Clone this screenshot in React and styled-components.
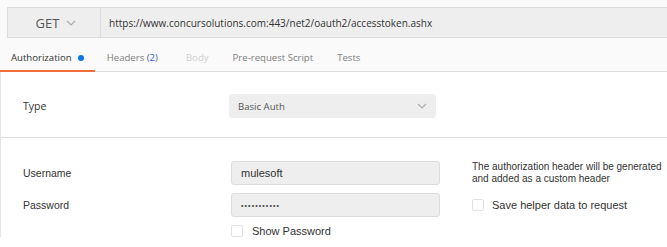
import React from "react";
import styled, { createGlobalStyle } from "styled-components";

const GlobalStyle = createGlobalStyle`
  html, body {
    margin: 0;
    background: #ffffff;
  }
  body {
    font-family: "Open Sans", "Liberation Sans", sans-serif;
    color: #333;
  }
`;

const Chevron = ({ size = 10, color = "#aaa" }) => (
  <svg width={size} height={size * 0.6} viewBox="0 0 10 6" fill="none">
    <path d="M1 1l4 4 4-4" stroke={color} strokeWidth="1.1" />
  </svg>
);

const Page = styled.div`
  width: 667px;
  height: 247px;
  overflow: hidden;
`;

const Header = styled.div`
  background: #fafafa;
  padding-top: 7px;
`;

const UrlBar = styled.div`
  display: flex;
  height: 31px;
  margin-left: 7px;
`;

const MethodSelect = styled.div`
  width: 93px;
  display: flex;
  align-items: center;
  justify-content: center;
  gap: 7px;
  background: #eeeeee;
  border: 1px solid #dcdcdc;
  border-right: none;
  box-sizing: border-box;
  font-size: 13px;
  color: #555;
  padding-left: 4px;
`;

const UrlInput = styled.div`
  flex: 1;
  display: flex;
  align-items: center;
  padding-left: 8px;
  background: #eeeeee;
  border: 1px solid #dcdcdc;
  border-right: none;
  font-size: 10px;
  color: #333;
`;

const Tabs = styled.div`
  display: flex;
  height: 34px;
  border-bottom: 1px solid #dddddd;
  box-sizing: border-box;
`;

const Tab = styled.div`
  display: flex;
  align-items: center;
  gap: 6px;
  padding: 7px ${(p) => p.$pad || 12}px 0;
  font-size: 9.6px;
  color: ${(p) => (p.$disabled ? "#cfcfcf" : p.$active ? "#333" : "#808080")};
  border-bottom: 2px solid ${(p) => (p.$active ? "#f26b3a" : "transparent")};
  margin-bottom: -1px;
  margin-right: ${(p) => p.$mr || 0}px;
`;

const Dot = styled.span`
  width: 6px;
  height: 6px;
  border-radius: 50%;
  background: #0b74e5;
`;

const Count = styled.span`
  color: #3d5bd9;
`;

const Body = styled.div`
  border-left: 1px solid #e4e4e4;
  background: #fff;
`;

const TypeRow = styled.div`
  display: grid;
  grid-template-columns: 206px 207px 1fr;
  padding: 3px 0 0 22px;
  height: 66px;
  align-items: center;
  border-bottom: 1px solid #dcdcdc;
  box-sizing: border-box;
`;

const Label = styled.div`
  font-family: ${(p) => (p.$helv ? '"Liberation Sans", Arial, sans-serif' : '"Open Sans", sans-serif')};
  font-size: 10.5px;
  color: #333;
  height: ${(p) => p.$h || "auto"};
  display: flex;
  align-items: center;
`;

const Select = styled.div`
  height: 24px;
  background: #eeeeee;
  border-radius: 3px;
  display: flex;
  align-items: center;
  justify-content: space-between;
  padding: 0 9px;
  font-size: 9.6px;
  color: #555;
`;

const Credentials = styled.div`
  display: grid;
  grid-template-columns: 208px 209px 1fr;
  padding: 23px 0 0 22px;
`;

const Column = styled.div`
  display: flex;
  flex-direction: column;
  gap: 8px;
`;

const Input = styled.div`
  height: 24px;
  box-sizing: border-box;
  background: #eeeeee;
  border: 1px solid #dcdcdc;
  border-radius: 3px;
  display: flex;
  align-items: center;
  padding-left: 9px;
  font-family: "Liberation Sans", Arial, sans-serif;
  font-size: 11px;
  color: #333;
`;

const Masked = styled.span`
  font-size: 7px;
  letter-spacing: 1.1px;
  color: #444;
`;

const CheckRow = styled.label`
  display: flex;
  align-items: center;
  gap: ${(p) => p.$gap || 9}px;
  font-family: "Liberation Sans", Arial, sans-serif;
  font-size: 11px;
  color: #333;
  margin-top: ${(p) => p.$mt || 0}px;
  white-space: nowrap;
`;

const Box = styled.span`
  width: 12px;
  height: 12px;
  box-sizing: border-box;
  border: 1px solid #e2e2e2;
  border-radius: 2px;
  background: #fff;
`;

const HelpCol = styled.div`
  padding-left: 32px;
`;

const HelpText = styled.p`
  margin: 0;
  font-family: "Liberation Sans", Arial, sans-serif;
  font-size: 10px;
  line-height: 12px;
  color: #333;
  white-space: nowrap;
`;

export default function App() {
  return (
    <Page>
      <GlobalStyle />
      <Header>
        <UrlBar>
          <MethodSelect>
            GET <Chevron />
          </MethodSelect>
          <UrlInput>https://www.concursolutions.com:443/net2/oauth2/accesstoken.ashx</UrlInput>
        </UrlBar>
        <Tabs>
          <Tab $active $pad={11}>
            Authorization <Dot />
          </Tab>
          <Tab $mr={4}>
            <span>
              Headers <Count>(2)</Count>
            </span>
          </Tab>
          <Tab $disabled>Body</Tab>
          <Tab>Pre-request Script</Tab>
          <Tab>Tests</Tab>
        </Tabs>
      </Header>
      <Body>
        <TypeRow>
          <Label>Type</Label>
          <Select>
            Basic Auth <Chevron />
          </Select>
        </TypeRow>
        <Credentials>
          <Column>
            <Label $helv $h="24px">Username</Label>
            <Label $helv $h="24px">Password</Label>
          </Column>
          <Column>
            <Input>mulesoft</Input>
            <Input>
              <Masked>•••••••••••</Masked>
            </Input>
            <CheckRow>
              <Box /> Show Password
            </CheckRow>
          </Column>
          <HelpCol>
            <HelpText>
              The authorization header will be generated
              <br />
              and added as a custom header
            </HelpText>
            <CheckRow $mt={14} $gap={8}>
              <Box /> Save helper data to request
            </CheckRow>
          </HelpCol>
        </Credentials>
      </Body>
    </Page>
  );
}
